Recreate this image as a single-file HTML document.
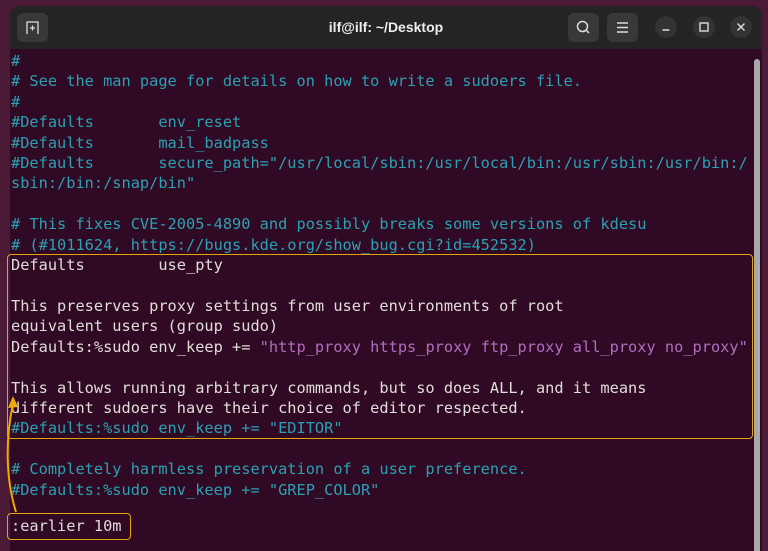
<!DOCTYPE html>
<html><head><meta charset="utf-8"><style>
*{margin:0;padding:0;box-sizing:border-box}
body{width:768px;height:545px;background:#4a1a36;overflow:hidden;position:relative;font-family:"Liberation Sans",sans-serif}
.win{position:absolute;left:10px;top:6px;width:752px;height:545px;background:#300a24;border-radius:10px 10px 0 0;overflow:hidden}
.tb{position:absolute;left:0;top:0;width:752px;height:43px;background:#242424}
.title{position:absolute;left:0;right:0;top:13px;text-align:center;color:#eee;font-size:14px;font-weight:bold}
.btn{position:absolute;top:7px;width:31px;height:29px;background:#383838;border-radius:6px}
.cb{position:absolute;top:10px;width:22px;height:22px;background:#333;border-radius:50%}
.term{position:absolute;left:1px;top:45px;font-family:"DejaVu Sans Mono","Liberation Mono",monospace;font-size:15.3px;line-height:20.4px;color:#e0dcd8;white-space:pre}
.c{color:#2aa1b3}.s{color:#b06dbf}
.sb{position:absolute;left:744px;top:53px;width:6px;height:500px;background:#a8a8a8;border-radius:3px}
.box{position:absolute;border:1.5px solid #e5a50a;border-radius:4px}
.ear{position:absolute;left:11px;top:516px;font-family:"DejaVu Sans Mono","Liberation Mono",monospace;font-size:15.3px;line-height:20.4px;color:#e0dcd8;white-space:pre}
</style></head><body>
<div class="win">
<div class="tb">
<div class="btn" style="left:7px"><svg width="31" height="29"><path d="M10 21V9h11v12M13 15h5M15.5 12.5v5" stroke="#ddd" stroke-width="1.3" fill="none"/></svg></div>
<div class="title">ilf@ilf: ~/Desktop</div>
<div class="btn" style="left:558px"><svg width="31" height="29"><circle cx="14.5" cy="13.5" r="5" stroke="#ddd" stroke-width="1.5" fill="none"/><path d="M18 17l3 3" stroke="#ddd" stroke-width="1.5"/></svg></div>
<div class="btn" style="left:597px"><svg width="31" height="29"><path d="M10 10h11M10 14.5h11M10 19h11" stroke="#ddd" stroke-width="1.4"/></svg></div>
<div class="cb" style="left:645px"><svg width="22" height="22"><path d="M7.5 14h7" stroke="#ddd" stroke-width="1.4"/></svg></div>
<div class="cb" style="left:683px"><svg width="22" height="22"><rect x="7" y="7" width="8" height="8" stroke="#ddd" stroke-width="1.4" fill="none"/></svg></div>
<div class="cb" style="left:720px"><svg width="22" height="22"><path d="M7.5 7.5l7 7M14.5 7.5l-7 7" stroke="#ddd" stroke-width="1.4"/></svg></div>
</div>
<div class="sb"></div>
<div class="term"><span class="c">#
# See the man page for details on how to write a sudoers file.
#
#Defaults       env_reset
#Defaults       mail_badpass
#Defaults       secure_path="/usr/local/sbin:/usr/local/bin:/usr/sbin:/usr/bin:/
sbin:/bin:/snap/bin"</span>

<span class="c"># This fixes CVE-2005-4890 and possibly breaks some versions of kdesu
# (#1011624, https://bugs.kde.org/show_bug.cgi?id=452532)</span>
Defaults        use_pty

This preserves proxy settings from user environments of root
equivalent users (group sudo)
Defaults:%sudo env_keep += <span class="s">"http_proxy https_proxy ftp_proxy all_proxy no_proxy"</span>

This allows running arbitrary commands, but so does ALL, and it means
different sudoers have their choice of editor respected.
<span class="c">#Defaults:%sudo env_keep += "EDITOR"</span>

<span class="c"># Completely harmless preservation of a user preference.
#Defaults:%sudo env_keep += "GREP_COLOR"</span></div>
</div>
<div class="ear">:earlier 10m</div>
<div class="box" style="left:7px;top:254px;width:746px;height:185px"></div>
<div class="box" style="left:7px;top:513px;width:124px;height:27px"></div>
<svg style="position:absolute;left:0;top:390px" width="30" height="125"><path d="M16 122C6 90 5 50 13 14" stroke="#f0a800" stroke-width="2" fill="none"/><path d="M8 18L13 6L18 17Z" fill="#f0a800"/></svg>
</body></html>
